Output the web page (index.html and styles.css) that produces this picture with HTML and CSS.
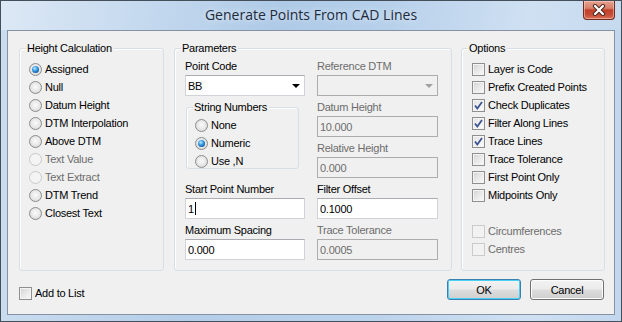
FILE: index.html
```html
<!DOCTYPE html>
<html>
<head>
<meta charset="utf-8">
<link rel="stylesheet" href="styles.css">
</head>
<body>
<div class="window">
  <div class="titlebar">
    <div class="title">Generate Points From CAD Lines</div>
    <div class="close">
      <svg width="14" height="12" viewBox="0 0 14 12">
        <path d="M3 2 L11 10 M11 2 L3 10" stroke="#4a2a22" stroke-width="4.2" stroke-linecap="round" fill="none"/>
        <path d="M3 2 L11 10 M11 2 L3 10" stroke="#ffffff" stroke-width="2.2" stroke-linecap="round" fill="none"/>
      </svg>
    </div>
  </div>
  <div class="client">
    <div class="groups">
      <div class="group g-height">
        <span class="legend">Height Calculation</span>
        <div class="row"><span class="radio on"></span>Assigned</div>
        <div class="row"><span class="radio"></span>Null</div>
        <div class="row"><span class="radio"></span>Datum Height</div>
        <div class="row"><span class="radio"></span>DTM Interpolation</div>
        <div class="row"><span class="radio"></span>Above DTM</div>
        <div class="row disabled"><span class="radio"></span>Text Value</div>
        <div class="row disabled"><span class="radio"></span>Text Extract</div>
        <div class="row"><span class="radio"></span>DTM Trend</div>
        <div class="row"><span class="radio"></span>Closest Text</div>
      </div>

      <div class="group g-params">
        <span class="legend">Parameters</span>
        <div class="pgrid">
          <div class="field c1 r1">
            <span class="lbl">Point Code</span>
            <div class="input combo"><span>BB</span><span class="arrow"></span></div>
          </div>
          <div class="strbox c1">
            <span class="legend">String Numbers</span>
            <div class="row"><span class="radio"></span>None</div>
            <div class="row"><span class="radio on"></span>Numeric</div>
            <div class="row"><span class="radio"></span>Use ,N</div>
          </div>
          <div class="field c1 r4">
            <span class="lbl">Start Point Number</span>
            <div class="input focus"><span>1</span><span class="caret"></span></div>
          </div>
          <div class="field c1 r5">
            <span class="lbl">Maximum Spacing</span>
            <div class="input"><span>0.000</span></div>
          </div>

          <div class="field c2 r1 disabled">
            <span class="lbl">Reference DTM</span>
            <div class="input combo"><span></span><span class="arrow"></span></div>
          </div>
          <div class="field c2 r2 disabled">
            <span class="lbl">Datum Height</span>
            <div class="input"><span>10.000</span></div>
          </div>
          <div class="field c2 r3 disabled">
            <span class="lbl">Relative Height</span>
            <div class="input"><span>0.000</span></div>
          </div>
          <div class="field c2 r4">
            <span class="lbl">Filter Offset</span>
            <div class="input"><span>0.1000</span></div>
          </div>
          <div class="field c2 r5 disabled">
            <span class="lbl">Trace Tolerance</span>
            <div class="input"><span>0.0005</span></div>
          </div>
        </div>
      </div>

      <div class="group g-options">
        <span class="legend">Options</span>
        <div class="row"><span class="check"></span>Layer is Code</div>
        <div class="row"><span class="check"></span>Prefix Created Points</div>
        <div class="row"><span class="check on"><svg width="11" height="11" viewBox="0 0 11 11"><path d="M2 5.5 L4.3 8.5 L9 2" stroke="#3d5390" stroke-width="1.8" fill="none"/></svg></span>Check Duplicates</div>
        <div class="row"><span class="check on"><svg width="11" height="11" viewBox="0 0 11 11"><path d="M2 5.5 L4.3 8.5 L9 2" stroke="#3d5390" stroke-width="1.8" fill="none"/></svg></span>Filter Along Lines</div>
        <div class="row"><span class="check on"><svg width="11" height="11" viewBox="0 0 11 11"><path d="M2 5.5 L4.3 8.5 L9 2" stroke="#3d5390" stroke-width="1.8" fill="none"/></svg></span>Trace Lines</div>
        <div class="row"><span class="check"></span>Trace Tolerance</div>
        <div class="row"><span class="check"></span>First Point Only</div>
        <div class="row"><span class="check"></span>Midpoints Only</div>
        <div class="spacer"></div>
        <div class="row disabled"><span class="check"></span>Circumferences</div>
        <div class="row disabled"><span class="check"></span>Centres</div>
      </div>
    </div>

    <div class="footer">
      <div class="row addlist"><span class="check"></span>Add to List</div>
      <div class="buttons">
        <div class="btn default">OK</div>
        <div class="btn">Cancel</div>
      </div>
    </div>
  </div>
</div>
</body>
</html>
```
FILE: styles.css
```css
* { box-sizing: border-box; }
html, body { margin: 0; padding: 0; }
body {
  width: 622px;
  height: 322px;
  overflow: hidden;
  font-family: "Liberation Sans", Arial, sans-serif;
  font-size: 11px;
  letter-spacing: -0.25px;
  color: #000;
}
.window {
  width: 622px;
  height: 322px;
  border: 1px solid #454f5a;
  padding: 0 6px 6px 6px;
  background: linear-gradient(90deg, #c9dcf0 0%, #b4cde8 30%, #bcd3ec 60%, #cfe0f2 85%, #c2d7ee 100%);
  display: flex;
  flex-direction: column;
}
.titlebar {
  position: relative;
  height: 29px;
  display: flex;
  align-items: center;
  justify-content: center;
  margin: 0 -6px;
  background: linear-gradient(100deg, #dce8f5 0%, #c3d8ee 25%, #aecae7 45%, #b5cfea 60%, #cfe0f2 85%, #c6daef 100%);
}
.title {
  font-family: "Open Sans", "Noto Sans", sans-serif;
  font-size: 14px;
  letter-spacing: 0;
  color: #1d2b3c;
  margin-top: -2px;
  text-shadow: 0 0 6px rgba(255,255,255,0.8);
}
.close {
  position: absolute;
  top: 0;
  right: 6px;
  width: 32px;
  height: 19px;
  border: 1px solid #6e2b20;
  border-top: none;
  border-radius: 0 0 4px 4px;
  background: linear-gradient(180deg, #e6a090 0%, #d7806b 40%, #c1402a 50%, #c64c36 75%, #d96f57 100%);
  box-shadow: inset 0 0 0 1px rgba(255,220,210,0.5);
  display: flex;
  align-items: center;
  justify-content: center;
}
.client {
  height: 285px;
  border: 1px solid #8592a3;
  background: #f0f0f0;
  padding: 17px 0 0 11px;
  display: flex;
  flex-direction: column;
}
.groups {
  display: flex;
  height: 223px;
}
.group {
  position: relative;
  border: 1px solid #d5dfe5;
  border-radius: 3px;
  box-shadow: inset 1px 1px 0 #fff;
  height: 223px;
}
.legend {
  position: absolute;
  top: -7px;
  left: 6px;
  padding: 0 2px 0 1px;
  line-height: 13px;
  background: #f0f0f0;
  white-space: nowrap;
}
.g-height {
  width: 145px;
  padding: 11px 0 0 9px;
}
.g-params {
  width: 278px;
  margin-left: 10px;
  padding: 11px 0 0 10px;
}
.g-options {
  width: 144px;
  margin-left: 9px;
  padding: 11px 0 0 10px;
}
.row {
  height: 18px;
  display: flex;
  align-items: center;
  white-space: nowrap;
}
.row.disabled { color: #6d6d6d; }
.spacer { height: 18px; }

.radio {
  width: 13px;
  height: 13px;
  flex: none;
  border-radius: 50%;
  border: 1px solid #8b8c8d;
  background: radial-gradient(circle at 50% 45%, #fbfbfb 0%, #e6e6e6 55%, #cdcdcd 100%);
  margin-right: 3px;
  display: flex;
  align-items: center;
  justify-content: center;
}
.radio.on::after {
  content: "";
  width: 7px;
  height: 7px;
  border-radius: 50%;
  background: radial-gradient(circle at 40% 35%, #b8ecff 0%, #3b9be0 40%, #0f5aa6 75%, #0a3c76 100%);
}
.disabled .radio {
  border-color: #c8c8c8;
  background: #f4f4f4;
}

.check {
  width: 13px;
  height: 13px;
  flex: none;
  border: 1px solid #8e8f8f;
  background: linear-gradient(135deg, #d2d2d2 0%, #e8e8e8 50%, #fafafa 100%);
  box-shadow: inset 0 0 0 1px #f4f4f4;
  margin-right: 3px;
  display: flex;
  align-items: center;
  justify-content: center;
}
.check.on { background: linear-gradient(135deg, #e2e2e2 0%, #f0f0f0 50%, #fdfdfd 100%); }
.check svg { display: block; }
.disabled .check {
  border-color: #cbcbcb;
  background: #f2f2f2;
  box-shadow: none;
}

.pgrid {
  display: grid;
  grid-template-columns: 120px 121px;
  grid-template-rows: repeat(5, 41px);
  column-gap: 12px;
}
.c1 { grid-column: 1; }
.c2 { grid-column: 2; }
.r1 { grid-row: 1; }
.r2 { grid-row: 2; }
.r3 { grid-row: 3; }
.r4 { grid-row: 4; }
.r5 { grid-row: 5; }
.field { display: flex; flex-direction: column; }
.lbl {
  display: block;
  line-height: 13px;
  margin-bottom: 2px;
  white-space: nowrap;
}
.field.disabled .lbl { color: #6d6d6d; }
.input {
  height: 21px;
  border: 1px solid #d0d3d8;
  border-top-color: #abadb3;
  background: #fff;
  display: flex;
  align-items: center;
  padding-left: 2px;
  position: relative;
}
.field.disabled .input {
  border: 1px solid #adadad;
  background: #f0f0f0;
  color: #6d6d6d;
}
.combo { justify-content: space-between; padding-right: 4px; }
.arrow {
  width: 0;
  height: 0;
  border-left: 4px solid transparent;
  border-right: 4px solid transparent;
  border-top: 4px solid #000;
  margin-top: 1px;
}
.field.disabled .arrow { border-top-color: #a0a0a0; }
.caret {
  width: 1px;
  height: 13px;
  background: #000;
  margin-left: 1px;
}
.strbox {
  grid-row: 2 / span 2;
  position: relative;
  align-self: start;
  width: 113px;
  height: 62px;
  margin-top: 6px;
  margin-left: 1px;
  border: 1px solid #d5dfe5;
  border-radius: 3px;
  box-shadow: inset 1px 1px 0 #fff;
  padding: 8px 0 0 8px;
}

.footer {
  display: flex;
  justify-content: space-between;
  align-items: flex-start;
  padding: 8px 10px 0 0;
}
.addlist { margin-top: 5px; }
.buttons { display: flex; gap: 9px; }
.btn {
  width: 74px;
  height: 21px;
  border: 1px solid #707070;
  border-radius: 3px;
  background: linear-gradient(180deg, #f2f2f2 0%, #ebebeb 48%, #dddddd 52%, #cfcfcf 100%);
  box-shadow: inset 0 0 0 1px #fcfcfc;
  display: flex;
  align-items: center;
  justify-content: center;
}
.btn.default {
  border-color: #3c7fb1;
  box-shadow: inset 0 0 0 1px #48d1f2;
}
```
